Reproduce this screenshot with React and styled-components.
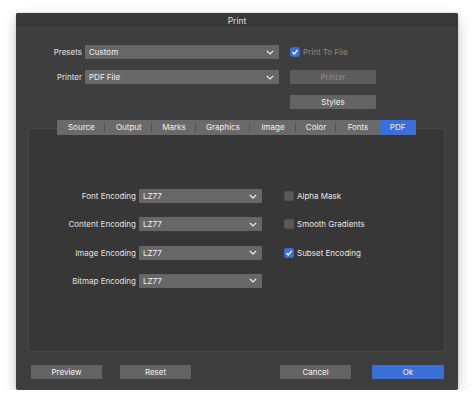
import React from "react"
import styled, { createGlobalStyle } from "styled-components"

const GlobalStyle = createGlobalStyle`
  html, body {
    margin: 0;
    padding: 0;
    background: #ffffff;
  }
  body {
    font-family: Inter, "Noto Sans", sans-serif;
    -webkit-font-smoothing: antialiased;
  }
`

//  window frame
const Page = styled.div`
  padding: 13px 0 0 16px;
`

const Window = styled.div`
  width: 442px;
  background: #3e3e3e;
  border-radius: 2px;
  box-shadow: 0 5px 14px rgba(0, 0, 0, 0.22), 0 0 2px rgba(0, 0, 0, 0.18);
  display: flex;
  flex-direction: column;
  color: #e4e4e4;
  font-size: 8px;
  overflow: hidden;
`

const TitleBar = styled.div`
  height: 13px;
  line-height: 16px;
  text-align: center;
  background: #393939;
  border-bottom: 1px solid #333333;
  box-sizing: border-box;
  color: #dcdcdc;
  font-size: 8.5px;
`

//  top form
const TopForm = styled.div`
  display: grid;
  grid-template-columns: 69px 194px 86px;
  grid-auto-rows: 14px;
  row-gap: 11px;
  padding-top: 19px;
  & > *:nth-child(3n) {
    margin-left: 11px;
  }
`

const Label = styled.div`
  text-align: right;
  padding-right: 3px;
  line-height: 14px;
  white-space: nowrap;
  color: #e2e2e2;
`

const SelectBox = styled.div`
  height: 14px;
  background: #676767;
  border-radius: 1px;
  display: flex;
  align-items: center;
  justify-content: space-between;
  padding: 0 5px 0 4px;
  box-sizing: border-box;
  color: #f2f2f2;
`

const Button = styled.div`
  height: 14px;
  line-height: 14px;
  text-align: center;
  border-radius: 1px;
  box-sizing: border-box;
  background: ${p => (p.primary ? "#3c6fd8" : p.disabled ? "#5c5c5c" : "#646464")};
  color: ${p => (p.disabled ? "#8d8d8d" : "#f2f2f2")};
  width: ${p => p.w || 86}px;
`

const CheckRow = styled.div`
  display: flex;
  align-items: center;
  gap: 3px;
  line-height: 14px;
  white-space: nowrap;
  color: ${p => (p.disabled ? "#8a8a8a" : "#e6e6e6")};
`

const Box = styled.div`
  width: 10px;
  height: 10px;
  border-radius: 2px;
  box-sizing: border-box;
  background: ${p => (p.checked ? "#3c6fd8" : "#5a5a5a")};
  border: 1px solid ${p => (p.checked ? "#3a66c4" : "#545454")};
  display: flex;
  align-items: center;
  justify-content: center;
`

//  tabs + panel
const TabArea = styled.div`
  display: flex;
  flex-direction: column;
  align-items: center;
  margin-top: 11px;
  padding: 0 13px 0 12px;
`

const TabBar = styled.div`
  display: flex;
  height: 15px;
  background: #6a6a6a;
  border-radius: 1px;
  position: relative;
  z-index: 1;
`

const Tab = styled.div`
  width: ${p => p.w}px;
  line-height: 15px;
  text-align: center;
  position: relative;
  background: ${p => (p.active ? "#3c6fd8" : "transparent")};
  color: #f2f2f2;
  &::after {
    content: "";
    position: absolute;
    right: 0;
    top: 3px;
    height: 9px;
    width: 1px;
    background: ${p => (p.sep ? "rgba(0,0,0,0.22)" : "transparent")};
  }
`

const Panel = styled.div`
  align-self: stretch;
  height: 224px;
  margin-top: -7px;
  background: #373737;
  border: 1px solid #454545;
  box-sizing: border-box;
  padding-top: 60px;
`

const PanelGrid = styled.div`
  display: grid;
  grid-template-columns: 110px 123px auto;
  grid-auto-rows: 14px;
  row-gap: 14.3px;
  & > *:nth-child(3n) {
    margin-left: 22px;
  }
`

//  footer
const Footer = styled.div`
  display: flex;
  justify-content: space-between;
  padding: 13px 14px 11px 15px;
`

const Group = styled.div`
  display: flex;
  gap: ${p => p.gap}px;
`

const Chevron = () => (
  <svg width="8" height="5" viewBox="0 0 8 5">
    <polyline points="0.8,0.8 4,4 7.2,0.8" fill="none" stroke="#f2f2f2" strokeWidth="1.2" />
  </svg>
)

const Check = () => (
  <svg width="8" height="8" viewBox="0 0 8 8">
    <polyline points="1.5,4.2 3.3,6 6.6,1.8" fill="none" stroke="#ffffff" strokeWidth="1.3" />
  </svg>
)

const Select = ({ value }) => (
  <SelectBox>
    <span>{value}</span>
    <Chevron />
  </SelectBox>
)

const Checkbox = ({ label, checked, disabled }) => (
  <CheckRow disabled={disabled}>
    <Box checked={checked}>{checked && <Check />}</Box>
    {label}
  </CheckRow>
)

const tabs = [
  ["Source", 48],
  ["Output", 47],
  ["Marks", 43.3],
  ["Graphics", 54.7],
  ["Image", 45.3],
  ["Color", 40.7],
  ["Fonts", 43.3],
  ["PDF", 36],
]

const encodings = [
  ["Font Encoding", "Alpha Mask", false],
  ["Content Encoding", "Smooth Gradients", false],
  ["Image Encoding", "Subset Encoding", true],
  ["Bitmap Encoding", null],
]

const App = () => {
  return (
    <Page>
      <GlobalStyle />
      <Window>
        <TitleBar>Print</TitleBar>

        <TopForm>
          <Label>Presets</Label>
          <Select value="Custom" />
          <Checkbox label="Print To File" checked disabled />

          <Label>Printer</Label>
          <Select value="PDF File" />
          <Button disabled>Printer</Button>

          <div />
          <div />
          <Button>Styles</Button>
        </TopForm>

        <TabArea>
          <TabBar>
            {tabs.map(([name, w], i) => (
              <Tab key={name} w={w} active={name === "PDF"} sep={i < tabs.length - 2}>
                {name}
              </Tab>
            ))}
          </TabBar>
          <Panel>
            <PanelGrid>
              {encodings.map(([label, check, checked]) => (
                <React.Fragment key={label}>
                  <Label>{label}</Label>
                  <Select value="LZ77" />
                  {check ? <Checkbox label={check} checked={checked} /> : <div />}
                </React.Fragment>
              ))}
            </PanelGrid>
          </Panel>
        </TabArea>

        <Footer>
          <Group gap={18}>
            <Button w={71}>Preview</Button>
            <Button w={71}>Reset</Button>
          </Group>
          <Group gap={21}>
            <Button w={71}>Cancel</Button>
            <Button w={72} primary>Ok</Button>
          </Group>
        </Footer>
      </Window>
    </Page>
  )
}

export default App
